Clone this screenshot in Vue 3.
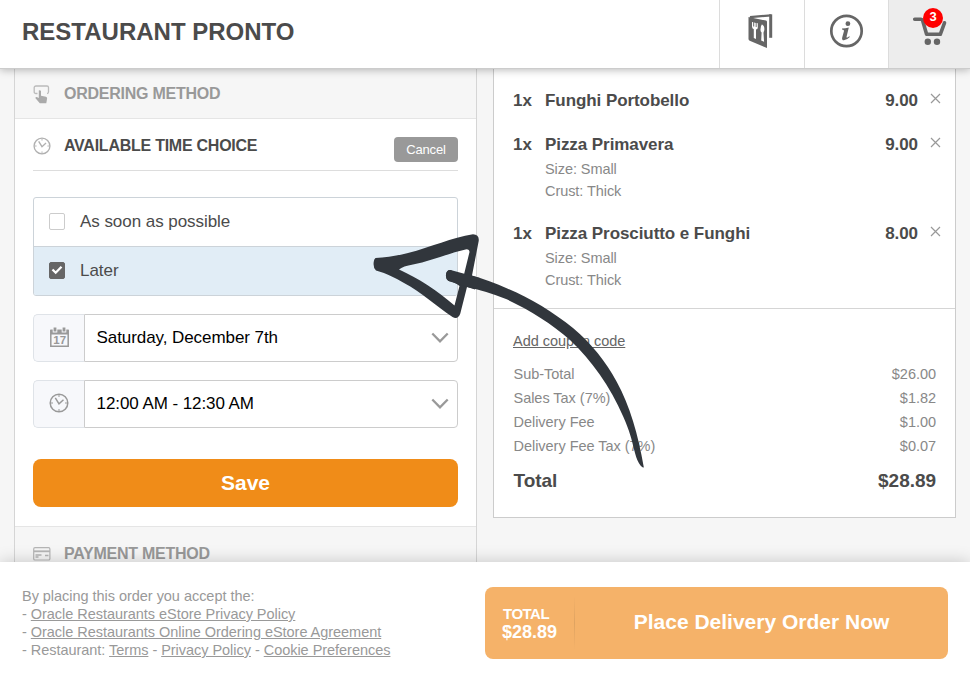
<template>
  <div class="page">
    <header class="header">
      <h1>RESTAURANT PRONTO</h1>
      <nav class="tabs">
        <a class="tab menu-tab">
          <svg width="26" height="36" viewBox="0 0 26 36">
            <path d="M2 3.200 23 1.300" stroke="#666" stroke-width="2.200" />
            <path d="M22.700 .3v23.500" stroke="#666" stroke-width="3" />
            <path d="M.5 3 18 6.600q1 .3 1 1.300V34L1.700 26.800Q.5 26.200 .5 25z" fill="#666" />
            <path d="M4 8v4.500q0 2 1.800 2.700V24l2.200.9v-9.300q1.800-.3 1.800-2.200V9.300l-1.200-.2v4l-.9-.2v-4l-1.500-.3v4l-1-.2v-4.100z" fill="#fff" />
            <path d="M13.800 10.500c2.300.8 2.900 3.600 2.400 6-.3 1.200-.8 1.800-.7 2.700l.6 8.500-2.900-1.100.4-8q-1.300-1-1.100-3.300.3-3.500 1.300-4.800z" fill="#fff" />
          </svg>
        </a>
        <a class="tab">
          <svg width="36" height="36" viewBox="0 0 36 36">
            <circle cx="17.500" cy="18" r="15.200" fill="none" stroke="#666" stroke-width="2.700" />
            <circle cx="18.900" cy="10.700" r="2.400" fill="#666" />
            <path d="M13 15.500q3.500-.1 6.800-.9l-2.300 9.300q-.2 1.100 1 .5l1.800-1.100.5.8q-3 3.200-5.900 3.200-2.400-.2-1.700-2.900l1.800-6.500q.3-1.200-2-1.400z" fill="#666" />
          </svg>
        </a>
        <a class="tab cart-tab">
          <svg width="36" height="32" viewBox="0 0 36 32">
            <path d="M2.700 3.200h6.300q1.200 0 1.600 1.300l4 13.800h13.700l4.200-11.500" fill="none" stroke="#666" stroke-width="3.600" stroke-linecap="round" stroke-linejoin="round" />
            <circle cx="15.800" cy="25.700" r="3.200" fill="#666" />
            <circle cx="25" cy="25.700" r="3.200" fill="#666" />
          </svg>
          <span class="badge">{{ cartItems.length }}</span>
        </a>
      </nav>
    </header>

    <main class="content">
      <section class="checkout">
        <div class="step step-ordering">
          <svg width="18" height="20" viewBox="0 0 18 20">
            <path d="M4.500 9.500H3Q1.200 9.500 1.200 8V3.500Q1.200 2 3 2h11q1.500 0 1.500 1.500V8q0 1.500-1.500 1.500" fill="none" stroke="#bbb" stroke-width="1.300" />
            <path d="M5.800 6.500q1.300-.8 2.200.5v4.800l5 1q1.300.4 1.100 1.700l-.8 4.700H6.800L2.300 14q.5-1.500 2-.8l1.500.9z" fill="#aaa" />
          </svg>
          <h2>ORDERING METHOD</h2>
        </div>

        <div class="time-choice">
          <div class="step-title">
            <svg class="clock" width="18" height="18" viewBox="0 0 20 20">
              <circle cx="10" cy="10" r="8.800" />
              <path d="m6.300 4.800 3.700 6 4.500-4" />
              <path class="ticks" d="M10 2v2M10 16v2M2 10h2M16 10h2" />
            </svg>
            <h2>AVAILABLE TIME CHOICE</h2>
            <button class="cancel">Cancel</button>
          </div>

          <div class="options">
            <div
              v-for="option in options"
              :key="option"
              class="option"
              :class="{ selected: option === selected }"
              @click="selected = option"
            >
              <span class="checkbox">
                <svg v-if="option === selected" width="12" height="10" viewBox="0 0 12 10">
                  <path d="m1.500 4.500 3.200 3.200 5.800-6" fill="none" stroke="#fff" stroke-width="2.300" />
                </svg>
              </span>
              {{ option }}
            </div>
          </div>

          <div class="field">
            <span class="field-icon">
              <svg width="19" height="20" viewBox="0 0 19 20">
                <path d="M.8 3.500h17.400v15.700H.8z" fill="none" stroke="#999" stroke-width="1.500" />
                <path d="M.5 2.700h18v4.800H.5z" fill="#999" />
                <path d="M5 .5v5M14 .5v5" stroke="#f7f8fb" stroke-width="4.600" />
                <path d="M5 .5v4M14 .5v4" stroke="#999" stroke-width="2.800" />
                <text x="9.700" y="17.200" text-anchor="middle">17</text>
              </svg>
            </span>
            <div class="select">
              <span>Saturday, December 7th</span>
              <svg width="18" height="12" viewBox="0 0 18 12">
                <path d="m1.300 1.500 7.700 7.800 7.700-7.800" />
              </svg>
            </div>
          </div>

          <div class="field">
            <span class="field-icon">
              <svg class="clock dark" width="20" height="20" viewBox="0 0 20 20">
                <circle cx="10" cy="10" r="8.800" />
                <path d="m6.300 4.800 3.700 6 4.500-4" />
                <path class="ticks" d="M10 2v2M10 16v2M2 10h2M16 10h2" />
              </svg>
            </span>
            <div class="select">
              <span>12:00 AM - 12:30 AM</span>
              <svg width="18" height="12" viewBox="0 0 18 12">
                <path d="m1.300 1.500 7.700 7.800 7.700-7.800" />
              </svg>
            </div>
          </div>

          <button class="save">Save</button>
        </div>

        <div class="step step-payment">
          <svg width="18" height="14" viewBox="0 0 18 14">
            <rect x=".7" y=".7" width="16.200" height="12.300" rx="1.300" fill="none" stroke="#b5b5b5" stroke-width="1.200" />
            <path d="M1 4.300h16" stroke="#b5b5b5" stroke-width="1.800" />
            <path d="M2.500 8h6M2.500 10h3M12 8.500h3.500" stroke="#b5b5b5" stroke-width="1.300" />
          </svg>
          <h2>PAYMENT METHOD</h2>
        </div>
      </section>

      <section class="cart">
        <div class="items">
          <div v-for="item in cartItems" :key="item.name" class="item">
            <span class="qty">{{ item.qty }}x</span>
            <div class="item-info">
              <strong>{{ item.name }}</strong>
              <ul v-if="item.extras.length">
                <li v-for="extra in item.extras" :key="extra">{{ extra }}</li>
              </ul>
            </div>
            <span class="price">{{ item.price }}</span>
            <svg class="remove" width="11" height="11" viewBox="0 0 11 11">
              <path d="m1 1 9 9M10 1l-9 9" />
            </svg>
          </div>
        </div>

        <div class="summary">
          <a class="coupon">Add coupon code</a>
          <div v-for="line in totals" :key="line.label" class="line">
            <span>{{ line.label }}</span>
            <span>{{ line.value }}</span>
          </div>
          <div class="line grand-total">
            <span>Total</span>
            <span>{{ total }}</span>
          </div>
        </div>
      </section>
    </main>

    <footer class="footer">
      <div class="legal">
        By placing this order you accept the:<br />
        - <a>Oracle Restaurants eStore Privacy Policy</a><br />
        - <a>Oracle Restaurants Online Ordering eStore Agreement</a><br />
        - Restaurant: <a>Terms</a> - <a>Privacy Policy</a> - <a>Cookie Preferences</a>
      </div>
      <button class="place-order">
        <span class="order-total">
          <small>TOTAL</small>
          <span>{{ total }}</span>
        </span>
        <span class="order-label">Place Delivery Order Now</span>
      </button>
    </footer>

    <!-- hand drawn arrow pointing at the selected option -->
    <svg class="arrow" width="310" height="260" viewBox="360 220 310 260">
      <path
        fill-rule="evenodd"
        d="M375.500 258Q390 257.500 408 253C431 247 452 237.500 473 234.200Q479.500 234.500 478.700 241L472 275.500C484 279 495 283 506.700 288.300C530 298 553 312 573.300 328.300C591 343 606 362 616.700 381.700C630 406 638 434 643.800 467.200Q643 468.500 640.500 465.500Q637 461 635 453C631 437 630 432 623.300 416.700C610 386 592 361 570 340C552 324 530 310 506.700 299.300Q486 291 467 287L460.300 313.500Q458 320 452.500 317C436 306 421 292 404 283Q389 274 376 270.500Q373 268 373.700 262Q374 259 375.500 258Z
           M399 269.500C418 278 438 291 454.500 305.500L459.500 286Q454 281.500 448.500 281Q445 278 446.200 273.500Q447 269.500 450.500 270Q456 273.500 464 274.500L469.500 252Q469.500 249.500 466.500 249.200C449 253 431 261 413 264.500Q403 266 399 269.500Z"
      />
      <path d="M450.500 270Q446 270 446 275.500Q446 280.500 450 281.500L475 289.500 480 278Z" />
    </svg>
  </div>
</template>

<script setup>
import { ref } from "vue"

const options = ["As soon as possible", "Later"]
const selected = ref("Later")

const cartItems = [
  { qty: 1, name: "Funghi Portobello", price: "9.00", extras: [] },
  { qty: 1, name: "Pizza Primavera", price: "9.00", extras: ["Size: Small", "Crust: Thick"] },
  { qty: 1, name: "Pizza Prosciutto e Funghi", price: "8.00", extras: ["Size: Small", "Crust: Thick"] }
]

const totals = [
  { label: "Sub-Total", value: "$26.00" },
  { label: "Sales Tax (7%)", value: "$1.82" },
  { label: "Delivery Fee", value: "$1.00" },
  { label: "Delivery Fee Tax (7%)", value: "$0.07" }
]

const total = "$28.89"
</script>

<style>
body {
  margin: 0;
}
</style>

<style scoped>
* {
  box-sizing: border-box;
}

.page {
  position: relative;
  display: flex;
  flex-direction: column;
  width: 970px;
  height: 677px;
  overflow: hidden;
  background: #f6f6f6;
  color: #4b4b4b;
  font-family: "Liberation Sans", Arial, sans-serif;
}

h1,
h2 {
  margin: 0;
}

button {
  border: none;
  padding: 0;
  color: #fff;
  font-family: inherit;
  cursor: pointer;
}

.header {
  position: relative;
  z-index: 2;
  display: flex;
  flex: none;
  justify-content: space-between;
  height: 69px;
  background: #fff;
  border-bottom: 1px solid #ccc;
  box-shadow: 0 1px 8px rgba(0, 0, 0, 0.28);
}

.header h1 {
  padding-left: 22px;
  font-size: 24px;
  line-height: 63px;
}

.tabs {
  display: flex;
}

.tab {
  position: relative;
  display: flex;
  justify-content: center;
  width: 84px;
  padding-top: 13px;
  border-left: 1px solid #dcdcdc;
}

.menu-tab {
  width: 85px;
  padding: 14px 2px 0 0;
}

.cart-tab {
  width: 82px;
  padding-top: 16px;
  background: #ededed;
}

.badge {
  position: absolute;
  top: 8px;
  left: 34px;
  width: 20px;
  height: 20px;
  border-radius: 50%;
  background: #f00;
  color: #fff;
  font-size: 13px;
  font-weight: bold;
  line-height: 18px;
  text-align: center;
}

.content {
  display: flex;
  flex: 1;
  align-items: flex-start;
  gap: 16px;
  min-height: 0;
  padding: 0 14px;
}

.checkout {
  width: 463px;
  border: solid #d5d5d5;
  border-width: 0 1px;
  background: #fff;
}

.checkout h2 {
  font-size: 16px;
  line-height: 20px;
  letter-spacing: -0.25px;
}

.step {
  display: flex;
  align-items: center;
  gap: 13px;
  padding-left: 18px;
  background: #f6f6f6;
}

.step h2 {
  color: #999;
}

.step-ordering {
  height: 50px;
  border-bottom: 1px solid #e5e5e5;
}

.step-payment {
  height: 54px;
  border-top: 1px solid #e5e5e5;
}

.time-choice {
  padding: 0 18px 19px;
}

.step-title {
  display: flex;
  align-items: flex-start;
  gap: 13px;
  height: 52px;
  margin-bottom: 26px;
  padding-top: 17px;
  border-bottom: 1px solid #ddd;
}

.clock {
  margin-top: 1px;
  fill: none;
  stroke: #b0b0b0;
  stroke-width: 1.5;
}

.clock.dark {
  margin: 0;
  stroke: #999;
}

.clock .ticks {
  stroke-width: 1;
}

.cancel {
  width: 64px;
  height: 25px;
  margin: 1px 0 0 auto;
  border-radius: 4px;
  background: #999;
  font-size: 13px;
  line-height: 24px;
  letter-spacing: -0.2px;
}

.options {
  height: 99px;
  margin-bottom: 18px;
  border: 1px solid #ccd3d9;
  border-radius: 3px;
  overflow: hidden;
}

.option {
  display: flex;
  align-items: center;
  height: 48px;
  padding-left: 15px;
  font-size: 17px;
  letter-spacing: -0.05px;
}

.option.selected {
  height: 49px;
  border-top: 1px solid #ccd3d9;
  background: #e1edf6;
}

.checkbox {
  display: flex;
  align-items: center;
  justify-content: center;
  width: 16px;
  height: 17px;
  margin: 0 15px 2px 0;
  border: 1px solid #ccc;
  border-radius: 2px;
}

.selected .checkbox {
  border-color: #666;
  background: #666;
}

.field {
  display: flex;
  height: 48px;
  margin-bottom: 18px;
}

.field-icon {
  display: flex;
  align-items: center;
  justify-content: center;
  width: 51px;
  padding-bottom: 2px;
  border: 1px solid #dfe3e8;
  border-right: none;
  border-radius: 5px 0 0 5px;
  background: #f7f8fb;
}

.field-icon text {
  fill: #999;
  font-size: 11.5px;
  font-weight: bold;
}

.select {
  display: flex;
  flex: 1;
  align-items: center;
  justify-content: space-between;
  padding: 0 8px 1px 11.5px;
  border: 1px solid #ccc;
  border-radius: 0 4px 4px 0;
  background: #fff;
  color: #000;
  font-size: 17px;
  letter-spacing: -0.07px;
}

.select svg {
  fill: none;
  stroke: #999;
  stroke-width: 2.3;
}

.save {
  display: block;
  width: 100%;
  height: 48px;
  margin-top: 31px;
  border-radius: 8px;
  background: #f08c18;
  font-size: 21px;
  font-weight: bold;
}

.cart {
  width: 463px;
  height: 449px;
  border: 1px solid #ccc;
  border-top: none;
  background: #fff;
}

.items {
  height: 240px;
  padding: 21px 14px 0 19px;
  border-bottom: 1px solid #d5d5d5;
}

.item {
  display: flex;
  align-items: flex-start;
  padding-bottom: 22.3px;
  font-size: 17px;
  font-weight: bold;
  line-height: 22px;
  letter-spacing: -0.07px;
}

.qty {
  width: 32px;
}

.item-info {
  flex: 1;
}

.item ul {
  margin: 3px 0 -2px;
  padding: 0;
  list-style: none;
  color: #888;
  font-size: 14.5px;
  font-weight: normal;
}

.item li {
  line-height: 21.7px;
}

.remove {
  margin: 3px 0 0 12px;
  fill: none;
  stroke: #999;
  stroke-width: 1.2;
}

.summary {
  padding: 20px 19px 0;
}

.coupon {
  display: block;
  margin-bottom: 9px;
  color: #666;
  font-size: 14.5px;
  line-height: 24px;
  letter-spacing: -0.04px;
  text-decoration: underline;
}

.line {
  display: flex;
  justify-content: space-between;
  padding-left: 0.5px;
  color: #888;
  font-size: 14.5px;
  line-height: 24.1px;
  letter-spacing: -0.03px;
}

.grand-total {
  margin-top: 8px;
  color: #4b4b4b;
  font-size: 19px;
  font-weight: bold;
  line-height: 30px;
}

.footer {
  position: relative;
  z-index: 2;
  display: flex;
  flex: none;
  justify-content: space-between;
  height: 115px;
  padding: 25px 22px 0;
  background: #fff;
  box-shadow: 0 0 16px rgba(0, 0, 0, 0.2);
}

.legal {
  color: #999;
  font-size: 14.5px;
  line-height: 18px;
  letter-spacing: -0.035px;
}

.legal a {
  text-decoration: underline;
}

.place-order {
  display: flex;
  align-items: center;
  width: 463px;
  height: 72px;
  border-radius: 8px;
  background: #f5b269;
  font-weight: bold;
}

.order-total {
  display: flex;
  flex-direction: column;
  width: 90px;
  height: 52px;
  padding: 8px 0 0 17px;
  border-right: 1px solid;
  border-image: linear-gradient(transparent, #dfa361, transparent) 1;
  font-size: 18px;
  line-height: 18px;
  text-align: left;
}

.order-total small {
  padding-left: 1px;
  font-size: 15px;
  letter-spacing: -0.5px;
}

.order-label {
  flex: 1;
  padding-bottom: 2px;
  font-size: 21px;
}

.arrow {
  position: absolute;
  top: 220px;
  left: 360px;
  z-index: 3;
  fill: #31363c;
}
</style>
